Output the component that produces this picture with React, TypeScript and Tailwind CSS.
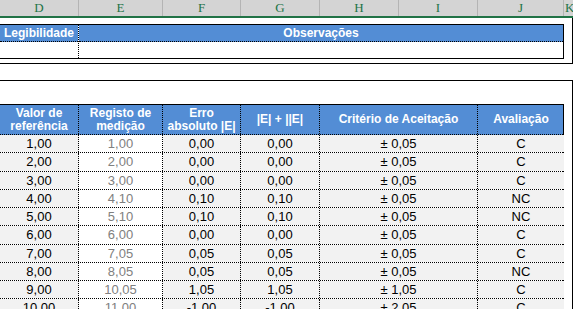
import React from "react";

const rows: string[][] = [
  ["1,00", "1,00", "0,00", "0,00", "± 0,05", "C"],
  ["2,00", "2,00", "0,00", "0,00", "± 0,05", "C"],
  ["3,00", "3,00", "0,00", "0,00", "± 0,05", "C"],
  ["4,00", "4,10", "0,10", "0,10", "± 0,05", "NC"],
  ["5,00", "5,10", "0,10", "0,10", "± 0,05", "NC"],
  ["6,00", "6,00", "0,00", "0,00", "± 0,05", "C"],
  ["7,00", "7,05", "0,05", "0,05", "± 0,05", "C"],
  ["8,00", "8,05", "0,05", "0,05", "± 0,05", "NC"],
  ["9,00", "10,05", "1,05", "1,05", "± 1,05", "C"],
  ["10,00", "11,00", "-1,00", "-1,00", "± 2,05", "C"],
];

const widths = ["w-[79px]", "w-[84px]", "w-[78px]", "w-[79px]", "w-[158px]", "w-[86px]"];

export default function App() {
  const letters: [string, string][] = [
    ["D", "w-[79px]"],
    ["E", "w-[84px]"],
    ["F", "w-[78px]"],
    ["G", "w-[79px]"],
    ["H", "w-[79px]"],
    ["I", "w-[79px]"],
    ["J", "w-[86px]"],
  ];
  return (
    <div className="w-[573px] h-[309px] overflow-hidden bg-white font-['Liberation_Sans',Arial,sans-serif] text-black">
      {/* column header bar */}
      <div className="flex h-[16px] bg-[#d4d4d4] font-['Liberation_Serif','DejaVu_Serif',serif] text-[13px] leading-[16px] text-[#217346]">
        {letters.map(([l, w]) => (
          <div key={l} className={`${w} shrink-0 border-r border-[#b4b4b4] text-center`}>
            {l}
          </div>
        ))}
        <div className="flex-1 pl-[1px]">K</div>
      </div>
      <div className="h-[2px] bg-[#217346]" />

      {/* top box */}
      <div className="border-r border-b border-black pt-[6px] pb-[4px]">
        <div className="w-[564px] flex border-t border-b border-r border-black text-[12px] font-bold text-white">
          <div className="w-[79px] shrink-0 flex flex-col border-r border-dotted border-black">
            <div className="h-[17px] bg-[#538dd5] border-b border-dotted border-black text-center leading-[16px]">
              Legibilidade
            </div>
            <div className="h-[16px]" />
          </div>
          <div className="flex-1 flex flex-col">
            <div className="h-[17px] bg-[#538dd5] border-b border-dotted border-black text-center leading-[16px]">
              Observações
            </div>
            <div className="h-[16px]" />
          </div>
        </div>
      </div>

      {/* second box */}
      <div className="mt-[16px] border-t border-r border-black pt-[23px] h-[300px]">
        <div className="w-[564px] border-t border-r border-black">
          <div className="flex h-[30px] bg-[#538dd5] border-b border-dotted border-black text-[12px] font-bold text-white leading-[13px]">
            {[
              ["Valor de", "referência"],
              ["Registo de", "medição"],
              ["Erro", "absoluto |E|"],
              ["|E| + ||E|"],
              ["Critério de Aceitação"],
              ["Avaliação"],
            ].map((lines, i) => (
              <div
                key={i}
                className={`${widths[i]} shrink-0 flex flex-col items-center justify-center text-center ${
                  i < 5 ? "border-r border-dotted border-black" : ""
                }`}
              >
                {lines.map((t) => (
                  <span key={t}>{t}</span>
                ))}
              </div>
            ))}
          </div>
          {rows.map((r, ri) => (
            <div key={ri} className="flex h-[18.25px] border-b border-dotted border-black text-[13px] leading-[17px]">
              {r.map((v, i) => (
                <div
                  key={i}
                  className={`${widths[i]} shrink-0 text-center ${
                    i === 1 ? "bg-white text-[#808080]" : "bg-[#f2f2f2]"
                  } ${i < 5 ? "border-r border-dotted border-black" : ""}`}
                >
                  {v}
                </div>
              ))}
            </div>
          ))}
        </div>
      </div>
    </div>
  );
}
